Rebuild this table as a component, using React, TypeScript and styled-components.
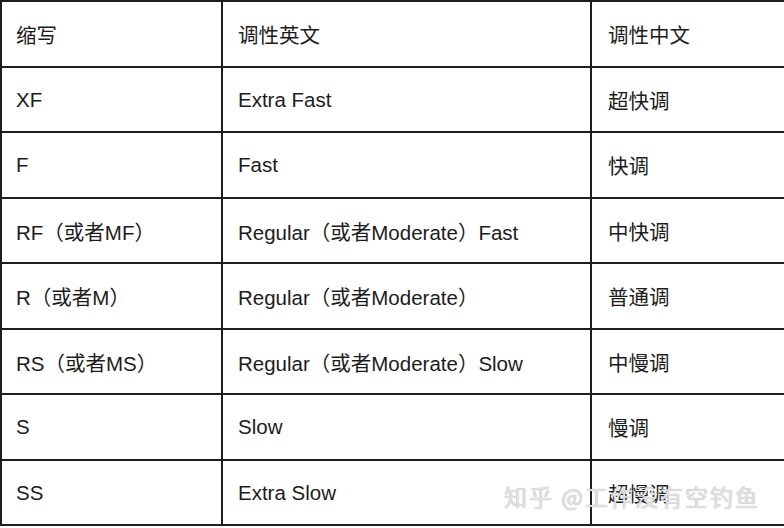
import { Fragment } from 'react';
import styled, { createGlobalStyle } from 'styled-components';

const GlobalStyle = createGlobalStyle`
  html, body {
    margin: 0;
    padding: 0;
    background: #fff;
  }
  body {
    font-family: "Liberation Sans", "Noto Sans CJK SC", sans-serif;
    color: #1c1c1c;
  }
`;

const Page = styled.div`
  position: relative;
  width: 784px;
  height: 528px;
  overflow: hidden;
  background: #fff;
`;

const Table = styled.div`
  display: grid;
  grid-template-columns: 221px 369px 200px;
  grid-auto-rows: 65.5px;
  border-top: 2px solid #1e1e1e;
  border-left: 2px solid #1e1e1e;
  width: 792px;
`;

const Cell = styled.div<{ $pad: number; $last?: boolean }>`
  display: flex;
  align-items: center;
  padding-left: ${(p) => p.$pad}px;
  padding-top: 1px;
  border-bottom: 2px solid #1e1e1e;
  border-right: ${(p) => (p.$last ? 'none' : '2px solid #1e1e1e')};
  font-size: 20.5px;
  white-space: nowrap;
  box-sizing: border-box;
`;

const Watermark = styled.div`
  position: absolute;
  left: 504px;
  top: 479px;
  font-family: "Noto Sans CJK SC", "Liberation Sans", sans-serif;
  font-size: 23px;
  letter-spacing: 2px;
  color: rgba(238, 238, 238, 0.9);
  text-shadow: 0 0 1px #8a8a8a;
  white-space: nowrap;
  pointer-events: none;
`;

const rows: [string, string, string][] = [
  ['缩写', '调性英文', '调性中文'],
  ['XF', 'Extra Fast', '超快调'],
  ['F', 'Fast', '快调'],
  ['RF（或者MF）', 'Regular（或者Moderate）Fast', '中快调'],
  ['R（或者M）', 'Regular（或者Moderate）', '普通调'],
  ['RS（或者MS）', 'Regular（或者Moderate）Slow', '中慢调'],
  ['S', 'Slow', '慢调'],
  ['SS', 'Extra Slow', '超慢调'],
];

export default function App() {
  return (
    <>
      <GlobalStyle />
      <Page>
        <Table>
          {rows.map((r, i) => (
            <Fragment key={i}>
              <Cell $pad={14}>{r[0]}</Cell>
              <Cell $pad={15}>{r[1]}</Cell>
              <Cell $pad={16} $last>
                {r[2]}
              </Cell>
            </Fragment>
          ))}
        </Table>
        <Watermark>知乎 @工作没有空钓鱼</Watermark>
      </Page>
    </>
  );
}
